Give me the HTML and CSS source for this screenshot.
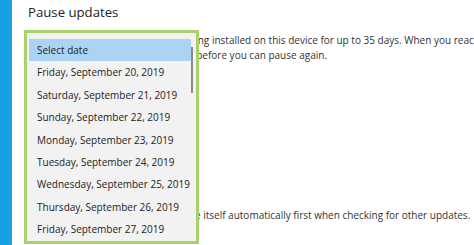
FILE: index.html
```html
<!DOCTYPE html>
<html>
<head>
<meta charset="utf-8">
<link rel="stylesheet" href="styles.css">
</head>
<body>
<div class="page">
  <div class="sidebar"></div>
  <div class="main">
    <h1 class="title">Pause updates</h1>
    <p class="desc">Temporarily pause updates from being installed on this device for up to 35 days. When you reach the pause limit, your<br>device will need to get new updates before you can pause again.</p>
    <p class="note">Note: Windows Update might update itself automatically first when checking for other updates.</p>
    <div class="focus">
      <ul class="list">
        <li class="item selected">Select date</li>
        <li class="item">Friday, September 20, 2019</li>
        <li class="item">Saturday, September 21, 2019</li>
        <li class="item">Sunday, September 22, 2019</li>
        <li class="item">Monday, September 23, 2019</li>
        <li class="item">Tuesday, September 24, 2019</li>
        <li class="item">Wednesday, September 25, 2019</li>
        <li class="item">Thursday, September 26, 2019</li>
        <li class="item">Friday, September 27, 2019</li>
      </ul>
      <div class="scrollbar"></div>
    </div>
  </div>
</div>
</body>
</html>
```
FILE: styles.css
```css
* { box-sizing: border-box; }
html, body { margin: 0; padding: 0; background: #fff; }
body {
  font-family: "Open Sans", "Noto Sans", sans-serif;
  color: #2b2b2b;
  width: 474px;
  height: 245px;
  overflow: hidden;
}
.page {
  display: flex;
  height: 245px;
}
.sidebar {
  width: 12px;
  flex: none;
  background: #16a1e7;
}
.main {
  position: relative;
  flex: 1;
  padding-left: 16px;
  overflow: hidden;
}
.title {
  margin: 0;
  padding-top: 1px;
  font-size: 13.2px;
  font-weight: 400;
  line-height: 22px;
  color: #222;
}
.desc {
  margin: 10px 0 0;
  font-size: 10px;
  line-height: 15px;
  white-space: nowrap;
  color: #333;
}
.note {
  margin: 145px 0 0;
  font-size: 10px;
  line-height: 15px;
  white-space: nowrap;
  color: #333;
}
.focus {
  position: absolute;
  left: 12px;
  top: 30px;
  width: 175px;
  height: 214px;
  border: 3px solid #a9d26d;
  background: #f2f2f2;
}
.list {
  list-style: none;
  margin: 0;
  padding: 6px 0 0 2px;
}
.item {
  height: 22.4px;
  line-height: 22.4px;
  padding-left: 8px;
  font-size: 10px;
  color: #222;
  width: 162px;
  white-space: nowrap;
}
.item.selected {
  background: #abd4f4;
}
.scrollbar {
  position: absolute;
  left: 164px;
  top: 14px;
  width: 2px;
  height: 46px;
  background: #8a8a8a;
}
```
